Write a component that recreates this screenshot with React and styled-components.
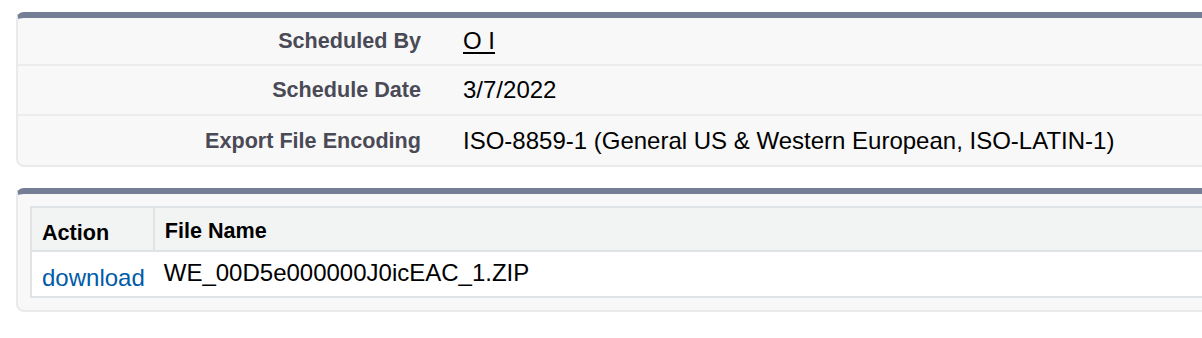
import React from 'react';
import styled, { createGlobalStyle } from 'styled-components';

const GlobalStyle = createGlobalStyle`
  html, body {
    margin: 0;
    padding: 0;
    background: #fff;
    overflow: hidden;
  }
  body {
    font-family: "Liberation Sans", Arial, Helvetica, sans-serif;
    color: #000;
  }
`;

const Page = styled.div`
  padding: 12px 0 0 16px;
`;

const Panel = styled.div`
  background: #f8f8f8;
  border: 2px solid #eaeaea;
  border-top: 6px solid #747e96;
  border-radius: 8px;
  margin-right: -30px;
  margin-top: ${(p) => p.$gap || 0}px;
  padding: ${(p) => p.$pad || 0}px;
`;

const DetailRow = styled.div`
  display: grid;
  grid-template-columns: 423px 1fr;
  align-items: center;
  height: ${(p) => p.$h}px;
  border-bottom: ${(p) => (p.$last ? 'none' : '2px solid #ececec')};
`;

const Label = styled.div`
  text-align: right;
  padding-right: 20px;
  font-size: 21.6px;
  font-weight: bold;
  color: #4a4a56;
  white-space: nowrap;
`;

const Value = styled.div`
  padding-left: 22px;
  font-size: 24px;
  color: #000;
  white-space: nowrap;
`;

const UserLink = styled.a`
  color: #000;
  text-decoration: underline;
  text-underline-offset: 3px;
`;

const Table = styled.table`
  width: 100%;
  border-collapse: collapse;
  border: 2px solid #e0e3e5;
  background: #fff;
`;

const HeadCell = styled.th`
  background: #f2f3f3;
  height: 44px;
  box-sizing: border-box;
  padding: ${(p) => (p.$first ? '12px 10px 4px' : '10px 10px 6px')};
  text-align: left;
  font-size: 21.6px;
  font-weight: bold;
  color: #000;
  white-space: nowrap;
  width: ${(p) => (p.$first ? '1px' : 'auto')};
  border-right: ${(p) => (p.$first ? '2px solid #e0e3e5' : 'none')};
  border-bottom: 2px solid #e0e3e5;
`;

const Cell = styled.td`
  height: 46px;
  box-sizing: border-box;
  padding: ${(p) => (p.$first ? '10px 9px 2px 10px' : '5px 10px 7px')};
  font-size: 24px;
  color: #000;
  white-space: nowrap;
`;

const DownloadLink = styled.a`
  color: #015ba7;
  text-decoration: none;
`;

const details = [
  { label: 'Scheduled By', value: <UserLink href="#">O I</UserLink>, h: 46 },
  { label: 'Schedule Date', value: '3/7/2022', h: 48 },
  {
    label: 'Export File Encoding',
    value: 'ISO-8859-1 (General US & Western European, ISO-LATIN-1)',
    h: 49,
  },
];

const App = () => {
  return (
    <Page>
      <GlobalStyle />
      <Panel>
        {details.map((d, i) => (
          <DetailRow key={d.label} $h={d.h} $last={i === details.length - 1}>
            <Label>{d.label}</Label>
            <Value>{d.value}</Value>
          </DetailRow>
        ))}
      </Panel>

      <Panel $gap={21} $pad={12}>
        <Table>
          <thead>
            <tr>
              <HeadCell $first>Action</HeadCell>
              <HeadCell>File Name</HeadCell>
            </tr>
          </thead>
          <tbody>
            <tr>
              <Cell $first>
                <DownloadLink href="#">download</DownloadLink>
              </Cell>
              <Cell>WE_00D5e000000J0icEAC_1.ZIP</Cell>
            </tr>
          </tbody>
        </Table>
      </Panel>
    </Page>
  );
};

export default App;
